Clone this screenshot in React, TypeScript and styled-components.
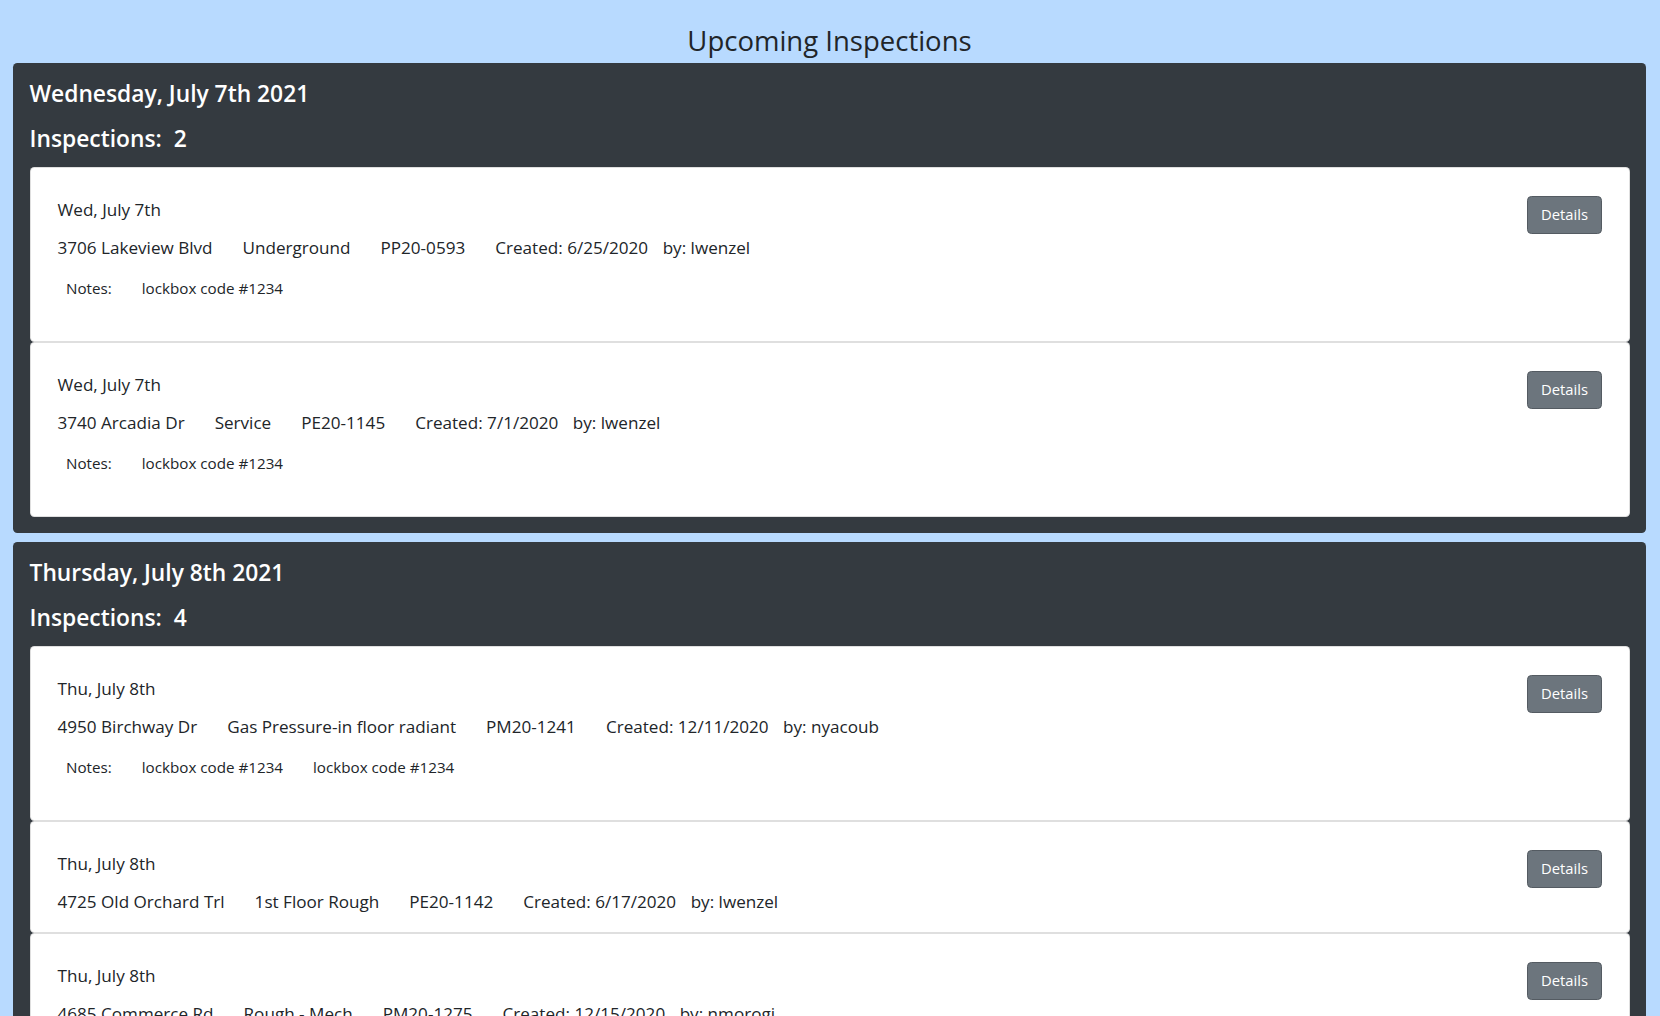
import styled, { createGlobalStyle } from 'styled-components';

type Inspection = {
  id: string;
  date: string;
  address: string;
  type: string;
  permit: string;
  created: string;
  by: string;
  notes: string[];
};

type Day = {
  heading: string;
  inspections: Inspection[];
};

const days: Day[] = [
  {
    heading: 'Wednesday, July 7th 2021',
    inspections: [
      {
        id: 'a1',
        date: 'Wed, July 7th',
        address: '3706 Lakeview Blvd',
        type: 'Underground',
        permit: 'PP20-0593',
        created: '6/25/2020',
        by: 'lwenzel',
        notes: ['lockbox code #1234'],
      },
      {
        id: 'a2',
        date: 'Wed, July 7th',
        address: '3740 Arcadia Dr',
        type: 'Service',
        permit: 'PE20-1145',
        created: '7/1/2020',
        by: 'lwenzel',
        notes: ['lockbox code #1234'],
      },
    ],
  },
  {
    heading: 'Thursday, July 8th 2021',
    inspections: [
      {
        id: 'b1',
        date: 'Thu, July 8th',
        address: '4950 Birchway Dr',
        type: 'Gas Pressure-in floor radiant',
        permit: 'PM20-1241',
        created: '12/11/2020',
        by: 'nyacoub',
        notes: ['lockbox code #1234', 'lockbox code #1234'],
      },
      {
        id: 'b2',
        date: 'Thu, July 8th',
        address: '4725 Old Orchard Trl',
        type: '1st Floor Rough',
        permit: 'PE20-1142',
        created: '6/17/2020',
        by: 'lwenzel',
        notes: [],
      },
      {
        id: 'b3',
        date: 'Thu, July 8th',
        address: '4685 Commerce Rd',
        type: 'Rough - Mech',
        permit: 'PM20-1275',
        created: '12/15/2020',
        by: 'nmorogi',
        notes: [],
      },
      {
        id: 'b4',
        date: 'Thu, July 8th',
        address: '4612 Maple Ridge Ct',
        type: 'Final',
        permit: 'PE20-1160',
        created: '7/2/2020',
        by: 'lwenzel',
        notes: [],
      },
    ],
  },
];

const GlobalStyle = createGlobalStyle`
  * {
    box-sizing: border-box;
  }

  body {
    margin: 0;
    background: #b8daff;
    color: #212529;
    font-family: 'Open Sans', 'Noto Sans', sans-serif;
  }
`;

const Page = styled.div`
  padding: 0 14px 0 13px;
`;

const Title = styled.h3`
  margin: 21.5px 0 4.5px;
  text-align: center;
  font-size: 27.5px;
  font-weight: 500;
  line-height: 37px;
  color: #212529;
`;

const DayPanel = styled.section`
  background: #343a40;
  border-radius: 4.4px;
  padding: 15.3px 16.5px 15.5px;
  margin-bottom: 9px;
  color: #fff;
`;

const DayHeading = styled.h4`
  margin: 0 0 12.8px;
  font-size: 22.8px;
  font-weight: 600;
  line-height: 31.7px;
  white-space: pre;
`;

const CardList = styled.div`
  display: flex;
  flex-direction: column;
`;

const Card = styled.div`
  display: flex;
  justify-content: space-between;
  align-items: flex-start;
  background: #fff;
  color: #212529;
  border: 1px solid rgba(0, 0, 0, 0.125);
  border-radius: 4.4px;
  padding: 29px 27px 17px;
`;

const Info = styled.div`
  display: flex;
  flex-direction: column;
`;

const DateLine = styled.div`
  font-size: 17.1px;
  line-height: 26px;
  margin-bottom: 12px;
`;

const DetailRow = styled.div`
  display: flex;
  gap: 30px;
  font-size: 17.1px;
  line-height: 26px;
`;

const CreatedGroup = styled.span`
  display: flex;
  gap: 14.5px;
`;

const NotesRow = styled.div`
  display: flex;
  gap: 30px;
  margin: 16px 0 24px 8.5px;
  font-size: 15.2px;
  line-height: 23px;
`;

const DetailsButton = styled.button`
  margin-top: -1px;
  padding: 6px 12.5px;
  background: #6c757d;
  color: #fff;
  border: 1px solid #545b62;
  border-radius: 4.4px;
  font-family: inherit;
  font-size: 14.8px;
  line-height: 23.7px;
  cursor: pointer;
`;

const InspectionCard = ({ inspection }: { inspection: Inspection }): JSX.Element => {
  return (
    <Card>
      <Info>
        <DateLine>{inspection.date}</DateLine>
        <DetailRow>
          <span>{inspection.address}</span>
          <span>{inspection.type}</span>
          <span>{inspection.permit}</span>
          <CreatedGroup>
            <span>Created: {inspection.created}</span>
            <span>by: {inspection.by}</span>
          </CreatedGroup>
        </DetailRow>
        {inspection.notes.length > 0 && (
          <NotesRow>
            <span>Notes:</span>
            {inspection.notes.map((note, index) => (
              <span key={index}>{note}</span>
            ))}
          </NotesRow>
        )}
      </Info>
      <DetailsButton type="button">Details</DetailsButton>
    </Card>
  );
};

const App = (): JSX.Element => {
  return (
    <>
      <GlobalStyle />
      <Page>
        <Title>Upcoming Inspections</Title>
        {days.map((day) => (
          <DayPanel key={day.heading}>
            <DayHeading>{day.heading}</DayHeading>
            <DayHeading>{`Inspections:  ${day.inspections.length}`}</DayHeading>
            <CardList>
              {day.inspections.map((inspection) => (
                <InspectionCard key={inspection.id} inspection={inspection} />
              ))}
            </CardList>
          </DayPanel>
        ))}
      </Page>
    </>
  );
};

export default App;
